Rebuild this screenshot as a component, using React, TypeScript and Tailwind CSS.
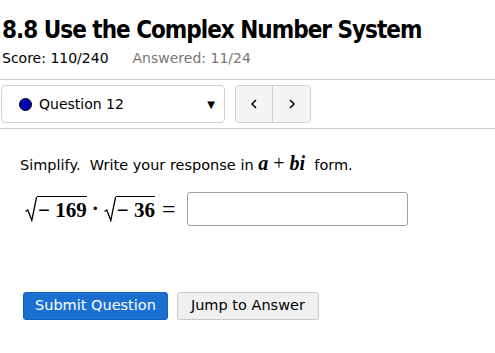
function Radical({ children }: { children: React.ReactNode }) {
  return (
    <span className="flex items-stretch">
      <svg width="12" height="26" viewBox="0 0 12 26" className="shrink-0">
        <path d="M0.5 15.5 L2.8 14 L6.8 24.5 L11.6 1" stroke="black" strokeWidth="1.3" fill="none" />
      </svg>
      <span className="border-t-[1.5px] border-black leading-[24px] pt-[1px] pl-[1px]">{children}</span>
    </span>
  );
}

export default function App() {
  return (
    <div className="w-[495px] h-[353px] bg-white text-black overflow-hidden" style={{ fontFamily: '"DejaVu Sans", sans-serif' }}>
      <div className="px-[2px] pt-[15px]">
        <h1 className="text-[24px] leading-[30px] font-bold tracking-[-1px] whitespace-nowrap" style={{ fontFamily: '"DejaVu Sans Condensed", "DejaVu Sans", sans-serif' }}>
          8.8 Use the Complex Number System
        </h1>
        <div className="flex gap-[24px] text-[14px] leading-[20px] mt-[3px]">
          <span>Score: 110/240</span>
          <span className="text-[#777777]">Answered: 11/24</span>
        </div>
      </div>
      <hr className="mt-[11px] border-t border-[#cccccc]" />
      <div className="flex items-center gap-[10px] pl-[1px] py-[5px]">
        <div className="w-[224px] h-[38px] border border-[#d0d0d0] rounded-[4px] flex items-center pl-[17px] pr-[9px]">
          <span className="w-[13px] h-[13px] rounded-full bg-[#0000b0] border border-black" />
          <span className="ml-[7px] text-[14px]">Question 12</span>
          <span className="ml-auto text-[10px]">▼</span>
        </div>
        <div className="flex h-[38px] border border-[#d0d0d0] rounded-[4px] bg-[#f5f5f5]">
          <button className="w-[37px] flex items-center justify-center border-r border-[#d0d0d0]">
            <svg width="10" height="12" viewBox="0 0 10 12"><path d="M7 2 L3 6 L7 10" stroke="black" strokeWidth="1.5" fill="none" /></svg>
          </button>
          <button className="w-[37px] flex items-center justify-center">
            <svg width="10" height="12" viewBox="0 0 10 12"><path d="M3 2 L7 6 L3 10" stroke="black" strokeWidth="1.5" fill="none" /></svg>
          </button>
        </div>
      </div>
      <hr className="border-t border-[#cccccc]" />
      <div className="px-[20px] pt-[24px]">
        <p className="text-[14.5px] leading-[20px]">
          Simplify.&nbsp; Write your response in{' '}
          <span className="text-[20px] italic font-bold" style={{ fontFamily: '"Liberation Serif", serif' }}>
            a <span className="font-normal not-italic">+</span> bi
          </span>
          &nbsp; form.
        </p>
        <div className="flex items-center mt-[17px] pl-[5px]">
          <div className="flex items-center text-[21px] font-bold" style={{ fontFamily: '"Liberation Serif", serif' }}>
            <Radical>−&nbsp;169</Radical>
            <span className="mx-[5px]">·</span>
            <Radical>−&nbsp;36</Radical>
            <span className="ml-[7px] font-normal text-[24px] leading-[24px]">=</span>
          </div>
          <input className="ml-[11px] w-[221px] h-[34px] border border-[#a0a0a0] rounded-[3px]" />
        </div>
        <div className="flex gap-[9px] mt-[66px] pl-[3px]">
          <button className="h-[28px] px-[11px] rounded-[3px] bg-[#1a6fd0] border border-[#1560b8] text-white text-[14.5px]">Submit Question</button>
          <button className="h-[28px] px-[13px] rounded-[3px] bg-[#f0f0f0] border border-[#c8c8c8] text-black text-[14.5px]">Jump to Answer</button>
        </div>
      </div>
    </div>
  );
}
